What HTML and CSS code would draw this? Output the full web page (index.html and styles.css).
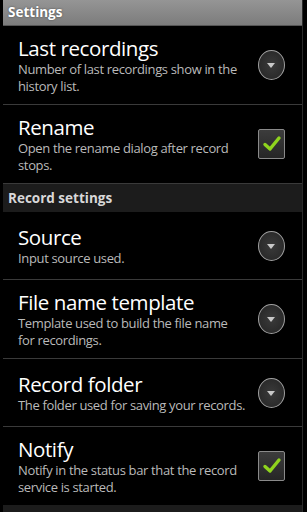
FILE: index.html
```html
<!DOCTYPE html>
<html lang="en">
<head>
	<meta charset="UTF-8" />
	<title>Settings</title>
	<link rel="stylesheet" href="styles.css">
</head>
<body>
	<div class="prefs">
		<div class="category first">Settings</div>

		<div class="pref two">
			<div class="text">
				<div class="title">Last recordings</div>
				<div class="summary">Number of last recordings show in the history list.</div>
			</div>
			<span class="spinner"></span>
		</div>

		<div class="pref two">
			<div class="text">
				<div class="title">Rename</div>
				<div class="summary">Open the rename dialog after record stops.</div>
			</div>
			<span class="check">
				<svg width="20" height="18" viewBox="0 0 20 18"><path d="M3 9.5 L8 14 L17 3" fill="none" stroke="#8fd41e" stroke-width="3.4" stroke-linecap="round" stroke-linejoin="round"/></svg>
			</span>
		</div>

		<div class="category">Record settings</div>

		<div class="pref">
			<div class="text">
				<div class="title">Source</div>
				<div class="summary">Input source used.</div>
			</div>
			<span class="spinner"></span>
		</div>

		<div class="pref two">
			<div class="text">
				<div class="title">File name template</div>
				<div class="summary">Template used to build the file name for&nbsp;recordings.</div>
			</div>
			<span class="spinner"></span>
		</div>

		<div class="pref">
			<div class="text">
				<div class="title">Record folder</div>
				<div class="summary">The folder used for saving your records.</div>
			</div>
			<span class="spinner"></span>
		</div>

		<div class="pref two last">
			<div class="text">
				<div class="title">Notify</div>
				<div class="summary">Notify in the status bar that the record service is started.</div>
			</div>
			<span class="check">
				<svg width="20" height="18" viewBox="0 0 20 18"><path d="M3 9.5 L8 14 L17 3" fill="none" stroke="#8fd41e" stroke-width="3.4" stroke-linecap="round" stroke-linejoin="round"/></svg>
			</span>
		</div>

		<div class="category"></div>
	</div>
</body>
</html>
```

FILE: styles.css
```css
body {
	margin: 0;
	background: #000;
	font-family: "Open Sans", "Noto Sans", sans-serif;
	color: #fff;
	overflow: hidden;
}

.prefs {
	margin-left: 3px;
	margin-right: 4px;
	border-right: 1px solid #2a2a2a;
}

.category {
	height: 28px;
	line-height: 28px;
	padding-left: 5px;
	font-size: 13.5px;
	font-weight: bold;
	color: #d8d8d8;
	background: #1c1c1c;
}

.category.first {
	height: 26px;
	line-height: 24px;
	color: #fff;
	background: linear-gradient(#959595, #7c7c7c);
	text-shadow: 0 0 2px #444;
	border-bottom: 1px solid #555;
	box-sizing: border-box;
}

.pref {
	display: flex;
	align-items: center;
	gap: 8px;
	min-height: 68px;
	padding: 9px 17px 9px 15px;
	box-sizing: border-box;
	border-bottom: 1px solid #3a3a3a;
}

.pref.last {
	border-bottom: none;
}

.text {
	flex: 1;
	min-width: 0;
}

.title {
	font-size: 20.5px;
	line-height: 26px;
	letter-spacing: -0.4px;
}

.summary {
	font-size: 13px;
	line-height: 17px;
	letter-spacing: -0.35px;
	color: #bababa;
}

.spinner {
	position: relative;
	flex: none;
	width: 25px;
	height: 28px;
	border-radius: 50%;
	border: 1.5px solid #a0a0a0;
	background: radial-gradient(#3a3a3a, #242424);
}

.spinner::after {
	content: "";
	position: absolute;
	left: 8px;
	top: 12px;
	border-left: 4.5px solid transparent;
	border-right: 4.5px solid transparent;
	border-top: 5px solid #c8c8c8;
}

.check {
	display: flex;
	align-items: center;
	justify-content: center;
	flex: none;
	width: 25px;
	height: 28px;
	border: 1.5px solid #8a8a8a;
	border-radius: 2px;
	background: linear-gradient(#3c3c3c, #262626);
}
```
